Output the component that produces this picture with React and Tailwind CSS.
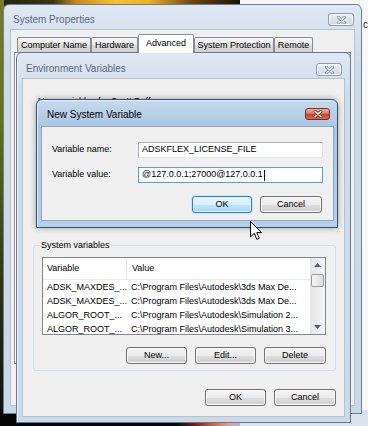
import React from 'react';

const rows = [
  ['ADSK_MAXDES_...', 'C:\\Program Files\\Autodesk\\3ds Max De...'],
  ['ADSK_MAXDES_...', 'C:\\Program Files\\Autodesk\\3ds Max De...'],
  ['ALGOR_ROOT_...', 'C:\\Program Files\\Autodesk\\Simulation 2...'],
  ['ALGOR_ROOT_...', 'C:\\Program Files\\Autodesk\\Simulation 3...'],
];

function CloseButton({ active = false }) {
  if (active) {
    return (
      <div className="w-[25px] h-[12px] rounded-[3px] border border-[#7a2e22] bg-[linear-gradient(#ecb4a6,#db7862_45%,#c6452e_55%,#d66b4e)] flex items-center justify-center">
        <svg width="10" height="8" viewBox="0 0 10 8">
          <path d="M2 1.2 L8 6.8 M8 1.2 L2 6.8" stroke="#6b2a20" strokeWidth="3" strokeLinecap="round" />
          <path d="M2 1.2 L8 6.8 M8 1.2 L2 6.8" stroke="#ffffff" strokeWidth="1.5" strokeLinecap="round" />
        </svg>
      </div>
    );
  }
  return (
    <div className="w-[26px] h-[13px] rounded-[3px] border border-[#8e9cad] bg-[linear-gradient(#eef3f8,#dbe3ed_50%,#cfd9e5)] shadow-[inset_0_0_0_1px_#f4f7fb] flex items-center justify-center">
      <svg width="11" height="8" viewBox="0 0 11 8">
        <path d="M2.5 1.3 L8.5 6.7 M8.5 1.3 L2.5 6.7" stroke="#8a96a5" strokeWidth="3" strokeLinecap="round" />
        <path d="M2.5 1.3 L8.5 6.7 M8.5 1.3 L2.5 6.7" stroke="#eef2f7" strokeWidth="1.4" strokeLinecap="round" />
      </svg>
    </div>
  );
}

function Button({ children, className = '', primary = false }) {
  return (
    <div
      className={`h-[17px] shrink-0 rounded-[3px] border flex items-center justify-center text-[9px] leading-none text-black ${
        primary
          ? 'border-[#3c7fb1] bg-[linear-gradient(#eaf6fd,#d9f0fc_50%,#bee6fd_51%,#a7d9f5)] shadow-[inset_0_0_0_1px_#d8eefa,0_0_2px_#7fc6f0]'
          : 'border-[#707070] bg-[linear-gradient(#f4f4f4,#ebebeb_50%,#dddddd_51%,#cfcfcf)] shadow-[inset_0_0_0_1px_#fafafa]'
      } ${className}`}
    >
      {children}
    </div>
  );
}

function Tab({ children, className = '', selected = false }) {
  return (
    <div
      className={`shrink-0 flex items-center justify-center text-[9px] leading-none border border-b-0 border-[#898c95] rounded-t-[2px] ${
        selected
          ? 'h-[19px] -mb-px bg-white relative z-10 pb-[2px]'
          : 'h-[15px] bg-[linear-gradient(#f6f6f6,#ebebeb_50%,#dddddd_51%,#d2d2d2)]'
      } ${className}`}
    >
      {children}
    </div>
  );
}

function Arrow({ down = false }) {
  return (
    <svg width="7" height="4" viewBox="0 0 7 4">
      <path d={down ? 'M0 0 L7 0 L3.5 4 Z' : 'M0 4 L7 4 L3.5 0 Z'} fill="#55606e" />
    </svg>
  );
}

export default function App() {
  return (
    <div className="relative w-[368px] h-[426px] overflow-hidden bg-[#060606] font-['Liberation_Sans',Arial,sans-serif] text-black">
      {/* desktop behind the windows */}
      <div className="absolute left-0 top-0 w-[240px] h-[8px] bg-[linear-gradient(90deg,#23260f,#3b3512_22%,#c98b1c_32%,#f3c233_48%,#eeb02a_62%,#6d4513_80%,#1b1208)]" />
      <div className="absolute left-[240px] top-0 right-0 h-full bg-[#f6f7f9]" />
      <div className="absolute left-0 top-0 w-[4px] h-[410px] bg-[linear-gradient(#7b7a2a,#62701f_30%,#2e3310_70%,#111111)]" />
      <div className="absolute left-[176px] top-[412px] w-[64px] h-[14px] bg-[linear-gradient(90deg,#060606,#7a1f10_30%,#d2592a_55%,#e59a8a_80%,#b7b2c8)]" />
      <div className="absolute left-[240px] top-[410px] right-0 bottom-0 bg-[#d8e3ee]" />
      <span className="absolute left-[363px] top-[19px] text-[10px] leading-[12px] text-[#333]">c</span>

      {/* System Properties */}
      <div className="absolute left-[3px] top-[4px] w-[359px] h-[410px] rounded-t-[6px] border border-[#6d7e90] bg-[linear-gradient(#dfe8f3,#cddaea_60px,#cbd8e8)] flex flex-col">
        <div className="h-[24px] shrink-0 flex items-start justify-between pl-[9px] pr-[7px]">
          <span className="mt-[9px] text-[10px] leading-[12px] text-[#5c6877]">System Properties</span>
          <div className="mt-[8px]">
            <CloseButton />
          </div>
        </div>
        <div className="flex-1 mx-[6px] mb-[7px] bg-[#f0f0f0] border border-[#b4c2d1] pt-[4px] px-[3px]">
          <div className="flex items-end h-[18px] pl-[3px]">
            <Tab className="w-[74px]">Computer Name</Tab>
            <Tab className="w-[47px]">Hardware</Tab>
            <Tab className="w-[56px]" selected>Advanced</Tab>
            <Tab className="w-[80px]">System Protection</Tab>
            <Tab className="w-[39px]">Remote</Tab>
          </div>
          <div className="h-[312px] bg-white border border-[#898c95]" />
        </div>
      </div>

      {/* Environment Variables */}
      <div className="absolute left-[16px] top-[52px] w-[335px] h-[371px] rounded-t-[6px] border border-[#66788b] bg-[linear-gradient(#e0e9f3,#cfdcea_40px,#ccd9e8)] shadow-[inset_1px_0_0_#f3f7fb] flex flex-col">
        <div className="h-[26px] shrink-0 flex items-start justify-between pl-[9px] pr-[8px]">
          <span className="mt-[10px] text-[10px] leading-[12px] text-[#5c6877]">Environment Variables</span>
          <div className="mt-[10px]">
            <CloseButton />
          </div>
        </div>
        <div className="flex-1 mx-[6px] mb-[6px] bg-[#f0f0f0] shadow-[0_0_0_1px_#b4c2d1] flex flex-col">
          <div className="h-[166px] shrink-0 pl-[15px] pt-[16px] text-[9px] leading-[12px]">User variables for Scott Duff</div>

          <div className="h-[126px] shrink-0 ml-[10px] mr-[8px] border border-[#d5dfe5] rounded-[3px] flex flex-col">
            <div className="-mt-[7px] ml-[6px] px-[1px] w-fit bg-[#f0f0f0] text-[9px] leading-[12px]">System variables</div>
            <div className="mt-[6px] ml-[8px] w-[284px] h-[78px] border border-[#828790] bg-white flex overflow-hidden">
              <div className="flex-1 flex flex-col text-[9px]">
                <div className="h-[22px] shrink-0 flex border-b border-[#eaeaea]">
                  <div className="w-[84px] pl-[4px] flex items-center border-r border-[#e3e3e3]">Variable</div>
                  <div className="flex-1 pl-[5px] flex items-center">Value</div>
                </div>
                {rows.map(([name, value], i) => (
                  <div key={i} className="h-[14px] shrink-0 flex items-center leading-none">
                    <div className="w-[84px] pl-[4px]">{name}</div>
                    <div className="flex-1 pl-[4px] whitespace-nowrap">{value}</div>
                  </div>
                ))}
              </div>
              <div className="w-[15px] shrink-0 bg-[linear-gradient(90deg,#e6e6e6,#f4f4f4)] flex flex-col items-center">
                <div className="h-[14px] flex items-center justify-center">
                  <Arrow />
                </div>
                <div className="mt-[2px] w-[13px] h-[13px] rounded-[2px] border border-[#9b9b9b] bg-[linear-gradient(90deg,#f5f5f5,#dedede)]" />
                <div className="flex-1" />
                <div className="h-[14px] flex items-center justify-center">
                  <Arrow down />
                </div>
              </div>
            </div>
            <div className="mt-[12px] mr-[9px] flex justify-end gap-[8px]">
              <Button className="w-[61px]">New...</Button>
              <Button className="w-[61px]">Edit...</Button>
              <Button className="w-[62px]">Delete</Button>
            </div>
          </div>

          <div className="mt-[18px] mr-[8px] flex justify-end gap-[8px]">
            <Button className="w-[61px]">OK</Button>
            <Button className="w-[62px]">Cancel</Button>
          </div>
        </div>
      </div>

      {/* New System Variable */}
      <div className="absolute left-[36px] top-[99px] w-[302px] h-[129px] rounded-t-[6px] border border-[#34506d] bg-[linear-gradient(#c6daef,#abc5e2_27px,#b6cfea)] shadow-[inset_1px_1px_0_#e4eef8,0_0_6px_rgba(0,0,0,0.35)] flex flex-col">
        <div className="h-[27px] shrink-0 flex items-start justify-between pl-[10px] pr-[7px]">
          <span className="mt-[9px] text-[10px] leading-[12px] text-black">New System Variable</span>
          <div className="mt-[8px]">
            <CloseButton active />
          </div>
        </div>
        <div className="flex-1 ml-[5px] mr-[4px] mb-[7px] bg-[#f0f0f0] shadow-[0_0_0_1px_#8fa7c2] flex flex-col text-[9px]">
          <div className="mt-[15px] flex items-center">
            <div className="w-[96px] pl-[10px]">Variable name:</div>
            <div className="w-[185px] h-[16px] border border-[#abadb3] border-b-[#e3e9ef] border-r-[#dbdfe6] bg-white pl-[3px] flex items-center">
              ADSKFLEX_LICENSE_FILE
            </div>
          </div>
          <div className="mt-[9px] flex items-center">
            <div className="w-[96px] pl-[10px]">Variable value:</div>
            <div className="w-[185px] h-[16px] border border-[#5f9bd4] bg-white pl-[3px] flex items-center">
              @127.0.0.1;27000@127.0.0.1
              <span className="ml-[1px] w-px h-[11px] bg-black" />
            </div>
          </div>
          <div className="mt-[13px] mr-[11px] flex justify-end gap-[8px]">
            <Button className="w-[60px]" primary>OK</Button>
            <Button className="w-[62px]">Cancel</Button>
          </div>
        </div>
      </div>

      {/* mouse pointer */}
      <svg className="absolute left-[250px] top-[221px]" width="13" height="20" viewBox="0 0 13 20">
        <path d="M0.5 0.5 L0.5 16 L4.3 12.3 L6.8 18.3 L9.2 17.3 L6.8 11.6 L11.6 11.6 Z" fill="#ffffff" stroke="#000000" strokeWidth="1" strokeLinejoin="round" />
      </svg>
    </div>
  );
}
